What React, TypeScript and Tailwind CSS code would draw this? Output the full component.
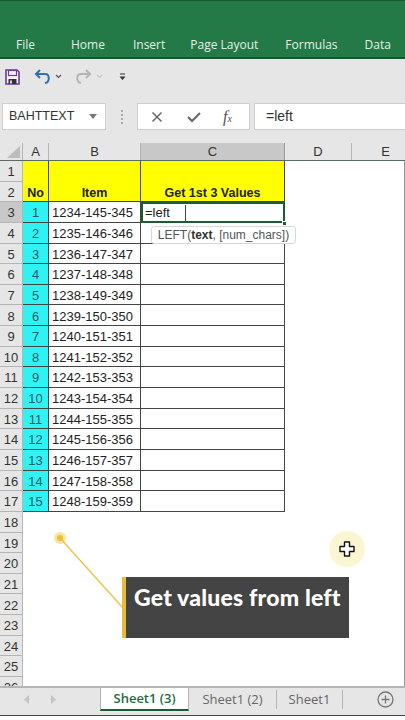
import React from 'react';

const tabs = [
  { label: 'File', className: 'ml-4' },
  { label: 'Home', className: 'ml-9' },
  { label: 'Insert', className: 'ml-7' },
  { label: 'Page Layout', className: 'ml-[25px]' },
  { label: 'Formulas', className: 'ml-[27px]' },
  { label: 'Data', className: 'ml-[27px]' },
];

const rows = Array.from({ length: 15 }, (_, i) => ({
  row: i + 3,
  no: i + 1,
  item: `${1234 + i}-${145 + i}-${345 + i}`,
}));

const emptyRows = [18, 19, 20, 21, 22, 23, 24, 25, 26];

const RowHead: React.FC<{ n: number; active?: boolean }> = ({ n, active }) => (
  <div
    className={`flex items-center justify-center border-r border-b border-[#b5b5b5] pt-[2px] text-[13px] text-[#333] ${
      active ? 'bg-[#c8c8c8]' : 'bg-[#e6e6e6]'
    }`}
  >
    {n}
  </div>
);

const Caret: React.FC<{ color: string }> = ({ color }) => (
  <svg width="7" height="5" viewBox="0 0 7 5" className="ml-1">
    <path d="M1 1l2.5 2.5L6 1" fill="none" stroke={color} strokeWidth="1.2" />
  </svg>
);

export default function App() {
  return (
    <div className="relative flex h-[720px] w-[405px] flex-col overflow-hidden bg-white font-['Liberation_Sans',sans-serif]">
      {/* Ribbon tabs */}
      <div className="flex h-[59px] items-end border-t border-b-2 border-t-[#1a5a35] border-b-[#17572f] bg-[#237a47] pb-[3px] font-['Open_Sans',sans-serif] text-[12px] text-[#e4f0e8]">
        {tabs.map((t) => (
          <span key={t.label} className={`whitespace-nowrap leading-[18px] ${t.className}`}>
            {t.label}
          </span>
        ))}
      </div>

      {/* Quick access + formula bar */}
      <div className="flex h-[83px] flex-col bg-[#e6e6e6]">
        <div className="flex h-[34px] items-center pt-[1px] pl-[5px]">
          <svg width="15" height="16" viewBox="0 0 15 16">
            <path d="M1 1h11l2 2v12H1z" fill="#f4f1f7" stroke="#6a3d9a" strokeWidth="1.6" />
            <rect x="3.5" y="1.5" width="8" height="5" fill="#f4f1f7" stroke="#6a3d9a" strokeWidth="1.2" />
            <rect x="3.5" y="10" width="8" height="5" fill="#333" />
            <rect x="5" y="11.5" width="2" height="3" fill="#ddd" />
          </svg>
          <svg width="17" height="15" viewBox="0 0 17 15" className="ml-[14px]">
            <path d="M6 1L2 5l4 4" fill="none" stroke="#2f6fb5" strokeWidth="2" />
            <path d="M2 5h9c5 0 5 8 0 9" fill="none" stroke="#2f6fb5" strokeWidth="2" />
          </svg>
          <Caret color="#555" />
          <svg width="17" height="15" viewBox="0 0 17 15" className="ml-[13px]">
            <path d="M11 1l4 4-4 4" fill="none" stroke="#b5b5b5" strokeWidth="2" />
            <path d="M15 5H6c-5 0-5 8 0 9" fill="none" stroke="#b5b5b5" strokeWidth="2" />
          </svg>
          <Caret color="#c4c4c4" />
          <svg width="7" height="8" viewBox="0 0 7 8" className="ml-[16px]">
            <path d="M1 1h5" stroke="#333" strokeWidth="1" />
            <path d="M0.5 3.5h6L3.5 7z" fill="#333" />
          </svg>
        </div>
        <div className="mt-[10px] flex h-[27px] items-stretch text-[#444]">
          <div className="ml-[2px] flex w-[104px] items-center justify-between border border-[#cfcfcf] bg-white pr-[8px] pl-[6px] text-[12.5px] text-[#333]">
            <span>BAHTTEXT</span>
            <svg width="8" height="5" viewBox="0 0 8 5">
              <path d="M0 0h8L4 5z" fill="#777" />
            </svg>
          </div>
          <div className="flex w-[31px] flex-col items-center justify-center gap-[2px]">
            <span className="h-[2px] w-[2px] bg-[#aaa]" />
            <span className="h-[2px] w-[2px] bg-[#aaa]" />
            <span className="h-[2px] w-[2px] bg-[#aaa]" />
            <span className="h-[2px] w-[2px] bg-[#aaa]" />
          </div>
          <div className="flex w-[113px] items-center border border-[#cfcfcf] bg-white pl-[13px]">
            <svg width="12" height="12" viewBox="0 0 12 12">
              <path d="M1.5 1.5l9 9M10.5 1.5l-9 9" stroke="#666" strokeWidth="1.5" />
            </svg>
            <svg width="14" height="12" viewBox="0 0 14 12" className="ml-[24px]">
              <path d="M1 6l4 4 8-8" fill="none" stroke="#666" strokeWidth="2" />
            </svg>
            <span className="ml-[22px] font-['Liberation_Serif',serif] text-[16px] text-[#555] italic">
              f<span className="text-[10px]">x</span>
            </span>
          </div>
          <div className="ml-[4px] flex flex-1 items-center border border-r-0 border-[#cfcfcf] bg-white pl-[11px] text-[14px] text-[#333]">
            =left
          </div>
        </div>
      </div>

      {/* Column headers */}
      <div className="flex h-[19px] border-b border-[#5c6b60] bg-[#e6e6e6] pt-[1px] text-[13px] text-[#333]">
        <div className="flex w-[23px] items-end justify-end border-r border-[#b5b5b5] p-[2px]">
          <svg width="13" height="12" viewBox="0 0 13 12">
            <path d="M13 0v12H0z" fill="#bdbdbd" />
          </svg>
        </div>
        <div className="flex w-[26px] items-center justify-center border-r border-[#b5b5b5]">A</div>
        <div className="flex w-[92px] items-center justify-center border-r border-[#b5b5b5]">B</div>
        <div className="flex w-[144px] items-center justify-center border-r border-[#9a9a9a] bg-[#c8c8c8]">C</div>
        <div className="flex w-[67px] items-center justify-center border-r border-[#b5b5b5]">D</div>
        <div className="flex flex-1 items-center justify-center pl-[14px]">E</div>
      </div>

      {/* Sheet */}
      <div className="relative min-h-0 flex-1 overflow-hidden border-r border-[#999]">
        <div className="grid grid-cols-[23px_26px_92px_144px] auto-rows-[20.65px] text-[13px] text-[#222]">
          <RowHead n={1} />
          <div className="row-span-2 flex items-end justify-center border-r border-b border-[#444] bg-[#ffff00] text-[12.5px] leading-[15px] font-bold">
            No
          </div>
          <div className="row-span-2 flex items-end justify-center border-r border-b border-[#444] bg-[#ffff00] text-[12.5px] leading-[15px] font-bold">
            Item
          </div>
          <div className="row-span-2 flex items-end justify-center border-r border-b border-[#444] bg-[#ffff00] text-[12.5px] leading-[15px] font-bold">
            Get 1st 3 Values
          </div>
          <RowHead n={2} />
          {rows.map((r) => (
            <React.Fragment key={r.row}>
              <RowHead n={r.row} active={r.row === 3} />
              <div className="flex items-center justify-center border-r border-b border-[#444] bg-[#2ff3f3] pt-[2px] text-[#2a5a66]">
                {r.no}
              </div>
              <div className="flex items-center border-r border-b border-[#444] pt-[2px] pl-[3px]">{r.item}</div>
              {r.row === 3 ? (
                <div className="flex items-center border-2 border-[#1d5b34] pl-[2px]">
                  =left
                  <span className="ml-[15px] h-[16px] w-px bg-[#444]" />
                </div>
              ) : (
                <div className="border-r border-b border-[#444]" />
              )}
            </React.Fragment>
          ))}
          {emptyRows.map((n) => (
            <React.Fragment key={n}>
              <RowHead n={n} />
              <div className="col-span-3" />
            </React.Fragment>
          ))}
        </div>

        {/* Fill handle + function tooltip */}
        <div className="absolute top-[60px] left-[282px] h-[5px] w-[5px] border border-white bg-[#1d5b34]" />
        <div className="absolute top-[65px] left-[151px] flex h-[18px] w-[145px] items-center justify-center rounded-[3px] border border-[#d8d8d8] bg-white text-[12px] whitespace-nowrap text-[#555]">
          LEFT(<b className="text-[#333]">text</b>, [num_chars])
        </div>

        {/* Callout */}
        <svg width="80" height="90" viewBox="0 0 80 90" className="absolute top-[370px] left-[50px]">
          <circle cx="10" cy="7" r="6" fill="#f8e6a0" />
          <circle cx="10" cy="7" r="3" fill="#e8c13a" />
          <path d="M10 7l63 70" stroke="#e8c13a" strokeWidth="1.2" />
        </svg>
        <div className="absolute top-[416px] left-[122px] h-[61px] w-[227px] border-l-4 border-[#e5bd38] bg-[#444444] pt-[6px] pl-[8px] font-['Lato',sans-serif] text-[23px] leading-[28px] font-black tracking-[0.2px] whitespace-nowrap text-white">
          Get values from left
        </div>

        {/* Mouse cursor */}
        <div className="absolute top-[370px] left-[329px] flex h-[36px] w-[36px] items-center justify-center rounded-full bg-[#fbf6d2]">
          <svg width="16" height="16" viewBox="0 0 16 16">
            <path
              d="M5.5 1h5v4.500h4.500v5h-4.500v4.500h-5v-4.500H1v-5h4.500z"
              fill="#fff"
              stroke="#111"
              strokeWidth="1.4"
              strokeLinejoin="round"
            />
          </svg>
        </div>
      </div>

      {/* Sheet tabs */}
      <div className="h-[34px] border-t-2 border-[#b4b4b4] bg-[#e6e6e6]">
        <div className="flex h-[23px] items-stretch font-['Open_Sans',sans-serif] text-[13px]">
          <div className="flex w-[100px] items-center gap-[22px] pl-[24px]">
            <svg width="5" height="9" viewBox="0 0 5 9">
              <path d="M5 0v9L0 4.500z" fill="#c4c4c4" />
            </svg>
            <svg width="5" height="9" viewBox="0 0 5 9">
              <path d="M0 0v9l5-4.500z" fill="#c4c4c4" />
            </svg>
          </div>
          <div className="flex w-[89px] items-center justify-center border-x border-b-2 border-x-[#b4b4b4] border-b-[#1d5b34] bg-white font-semibold text-[#1f6b40]">
            Sheet1 (3)
          </div>
          <div className="my-[2px] flex w-[88px] items-center justify-center border-r border-[#b4b4b4] text-[#666]">
            Sheet1 (2)
          </div>
          <div className="my-[2px] flex w-[66px] items-center justify-center border-r border-[#b4b4b4] text-[#666]">
            Sheet1
          </div>
          <div className="flex flex-1 items-center justify-end pr-[11px]">
            <svg width="17" height="17" viewBox="0 0 17 17">
              <circle cx="8.500" cy="8.500" r="7.500" fill="none" stroke="#777" strokeWidth="1.3" />
              <path d="M8.500 4.500v8M4.500 8.500h8" stroke="#777" strokeWidth="1.3" />
            </svg>
          </div>
        </div>
        <div className="h-[4px]" />
        <div className="h-[5px] border-t border-[#444] bg-white" />
      </div>
    </div>
  );
}
